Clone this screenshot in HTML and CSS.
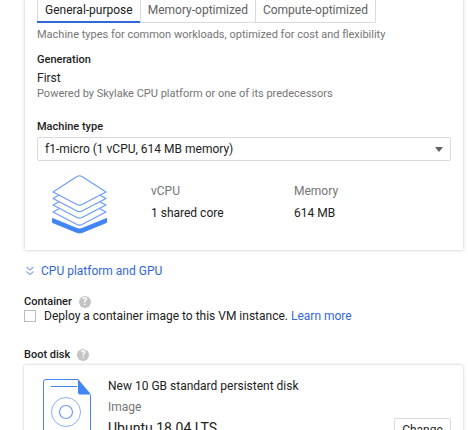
FILE: index.html
```html
<!DOCTYPE html>
<html lang="en">
<head>
    <meta charset="UTF-8">
    <title>Create an instance</title>
    <link rel="stylesheet" href="styles.css">
</head>
<body>
    <div class="page">
        <div class="card">
            <div class="tabs">
                <div class="tab active">General-purpose</div>
                <div class="tab">Memory-optimized</div>
                <div class="tab">Compute-optimized</div>
            </div>
            <p class="hint">Machine types for common workloads, optimized for cost and flexibility</p>
            <div class="label generation">Generation</div>
            <div class="value">First</div>
            <p class="hint small">Powered by Skylake CPU platform or one of its predecessors</p>
            <div class="label machine">Machine type</div>
            <div class="select">
                <span>f1-micro (1 vCPU, 614 MB memory)</span>
                <i class="caret"></i>
            </div>
            <div class="specs">
                <svg class="stack" width="60" height="61" viewBox="0 0 60 61">
                    <path d="M2.500 45.500 27 55.500q2.500 1 5 0L56.500 45.500V49.500L32 59.500q-2.500 1-5 0L2.500 49.500z" fill="#4285f4" stroke="#4285f4" stroke-linejoin="round"/>
                    <g fill="#fff" stroke="#699bf7" stroke-width="1.100" stroke-linejoin="round">
                        <path d="M3 39 27 26q2.500-1.300 5 0l24 13-24 12.500q-2.500 1.300-5 0z"/>
                        <path d="M3 32 27 19q2.500-1.300 5 0l24 13-24 12.500q-2.500 1.300-5 0z"/>
                        <path d="M3 25.500 27 12.500q2.500-1.300 5 0l24 13-24 12.500q-2.500 1.300-5 0z"/>
                        <path d="M3 19 27 3.500q2.500-1.500 5 0l24 15.500-24 12.500q-2.500 1.300-5 0z"/>
                    </g>
                </svg>
                <div class="spec cpu">
                    <div class="spec-name">vCPU</div>
                    <div class="spec-value">1 shared core</div>
                </div>
                <div class="spec">
                    <div class="spec-name">Memory</div>
                    <div class="spec-value">614 MB</div>
                </div>
            </div>
        </div>

        <a class="expand">
            <svg width="10" height="10" viewBox="0 0 10 10">
                <path d="M1.500 1 5 4l3.500-3M1.500 5.500 5 8.500l3.500-3" fill="none" stroke="#8fa8e2" stroke-width="1.100"/>
            </svg>
            CPU platform and GPU
        </a>

        <div class="label with-help container-label">Container <span class="help">?</span></div>
        <label class="check">
            <span class="box"></span>
            <span>Deploy a container image to this VM instance. <a class="link">Learn more</a></span>
        </label>

        <div class="label with-help boot-label">Boot disk <span class="help">?</span></div>
        <div class="disk">
            <svg class="disk-icon" width="48" height="70" viewBox="0 0 48 70">
                <path d="M35 .5H3Q.500.500.500 3V70" fill="none" stroke="#4285f4"/>
                <path d="M47.500 16V70" fill="none" stroke="#4285f4"/>
                <path d="M35 0 48 15.500H37Q35 15.500 35 13.500z" fill="#4285f4"/>
                <path d="M8 7.500H34" stroke="#4285f4"/>
                <circle cx="23" cy="33" r="14.500" fill="none" stroke="#8ab1f7"/>
                <circle cx="23" cy="33" r="6.500" fill="none" stroke="#6a9cf6" stroke-width="1.200"/>
            </svg>
            <div class="disk-info">
                <div class="disk-title">New 10 GB standard persistent disk</div>
                <div class="disk-label">Image</div>
                <div class="disk-image">Ubuntu 18.04 LTS</div>
            </div>
            <button class="change">Change</button>
        </div>
    </div>
</body>
</html>
```

FILE: styles.css
```css
html, body {
    margin: 0;
    height: 430px;
    overflow: hidden;
    background: #fff;
}
body {
    font-family: Roboto, sans-serif;
    font-size: 12px;
    color: #212121;
}
.page {
    padding-left: 24px;
    width: 439px;
}
.card {
    height: 250px;
    box-sizing: border-box;
    margin-left: 1px;
    padding: 0 12px;
    background: #fff;
    box-shadow: 0 0 3px rgba(0,0,0,0.25);
}
.tabs {
    display: flex;
    width: max-content;
    height: 23px;
    box-sizing: border-box;
    border: 1px solid #dadada;
    border-top: none;
    border-radius: 0 0 2px 2px;
}
.tab {
    padding: 0 7px;
    line-height: 21px;
    color: #616161;
    border-left: 1px solid #dadada;
}
.tab:first-child {
    border-left: none;
}
.tab.active {
    color: #212121;
    height: 23px;
    box-sizing: border-box;
    margin: 0 0 -1px -1px;
    padding: 0 7px 0 8px;
    border-bottom: 2px solid #3367d6;
}
.hint {
    margin: 5px 0 0;
    font-size: 11px;
    line-height: 14px;
    color: #757575;
}
.label {
    font-size: 11px;
    font-weight: 500;
    line-height: 14px;
    color: #212121;
}
.generation {
    margin-top: 11px;
}
.value {
    margin-top: 3px;
    line-height: 16px;
}
.hint.small {
    margin-top: 1px;
}
.machine {
    margin-top: 19px;
}
.select {
    display: flex;
    align-items: center;
    justify-content: space-between;
    height: 22px;
    margin-top: 3px;
    padding: 0 7px;
    border: 1px solid #dadada;
    border-radius: 2px;
}
.caret {
    border: 4px solid transparent;
    border-top: 5px solid #616161;
    border-bottom: none;
}
.specs {
    display: flex;
    margin-top: 12px;
}
.stack {
    margin-left: 13px;
}
.spec {
    padding-top: 10px;
}
.spec.cpu {
    width: 143px;
    margin-left: 41px;
}
.spec-name {
    line-height: 16px;
    color: #757575;
}
.spec-value {
    margin-top: 6px;
    line-height: 16px;
}
.expand {
    display: flex;
    align-items: center;
    gap: 6px;
    margin: 13px 0 0 1px;
    line-height: 16px;
    color: #3367d6;
}
.with-help {
    display: flex;
    align-items: center;
    gap: 7px;
}
.help {
    width: 12px;
    height: 12px;
    border-radius: 50%;
    background: #c4c4c4;
    color: #fff;
    font-size: 10px;
    font-weight: 700;
    line-height: 12px;
    text-align: center;
}
.container-label {
    margin-top: 16px;
}
.check {
    display: flex;
    align-items: center;
    gap: 8px;
    margin-top: -1px;
    line-height: 16px;
}
.box {
    width: 10px;
    height: 10px;
    border: 1px solid #bdbdbd;
}
.link {
    color: #3367d6;
}
.boot-label {
    margin-top: 24px;
}
.disk {
    display: flex;
    height: 100px;
    margin-top: 3px;
    padding: 13px 12px 0 19px;
    box-sizing: border-box;
    border-radius: 2px;
    box-shadow: 0 0 3px rgba(0,0,0,0.25);
}
.disk-icon {
    flex: none;
    margin-top: 1px;
}
.disk-info {
    flex: 1;
    margin-left: 17px;
}
.disk-title {
    line-height: 16px;
}
.disk-label {
    margin-top: 5px;
    font-size: 12px;
    line-height: 16px;
    color: #757575;
}
.disk-image {
    margin-top: 5px;
    font-size: 14px;
    line-height: 16px;
}
.change {
    align-self: flex-start;
    margin-top: 40px;
    width: 57px;
    height: 24px;
    padding: 0;
    background: #fff;
    border: 1px solid #dadada;
    border-radius: 2px;
    font-family: Roboto, sans-serif;
    font-size: 12px;
    color: #212121;
}
```
